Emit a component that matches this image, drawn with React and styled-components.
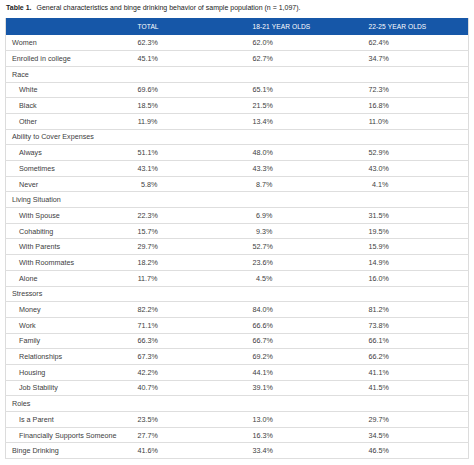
import React from 'react';
import styled, { createGlobalStyle } from 'styled-components';

const GlobalStyle = createGlobalStyle`
  html, body {
    margin: 0;
    padding: 0;
    background: #ffffff;
  }
  body {
    font-family: 'Liberation Sans', Arial, sans-serif;
  }
`;

const Page = styled.div`
  width: 474px;
  height: 465px;
  padding: 2px 6px 0 5px;
  box-sizing: border-box;
`;

const Caption = styled.div`
  font-size: 7px;
  line-height: 12px;
  height: 16px;
  color: #222;
  padding-left: 1px;
  b {
    font-weight: 700;
    margin-right: 3px;
  }
`;

const Table = styled.table`
  width: 463px;
  border-collapse: collapse;
  table-layout: fixed;
  border-left: 1px solid #dcdcdc;
  border-right: 1px solid #dcdcdc;
`;

const HeadCell = styled.th`
  background: #1657a8;
  color: #ffffff;
  font-size: 6.6px;
  font-weight: 400;
  text-align: left;
  height: 17px;
  padding: 0 0 0 6px;
  box-sizing: border-box;
  letter-spacing: 0.1px;
`;

const Row = styled.tr`
  height: 15.7px;
  border-bottom: 1px solid #dedede;
`;

const Label = styled.td`
  font-size: 7.2px;
  color: #404040;
  padding: 0 0 0 ${p => (p.$indent ? 13 : 6)}px;
  white-space: nowrap;
`;

const Cell = styled.td`
  font-size: 7.2px;
  color: #404040;
  padding: 0 0 0 6px;
`;

const Num = styled.span`
  display: inline-block;
  width: 20px;
  text-align: right;
`;

const rows = [
  ['Women', '62.3%', '62.0%', '62.4%'],
  ['Enrolled in college', '45.1%', '62.7%', '34.7%'],
  ['Race'],
  ['White', '69.6%', '65.1%', '72.3%', true],
  ['Black', '18.5%', '21.5%', '16.8%', true],
  ['Other', '11.9%', '13.4%', '11.0%', true],
  ['Ability to Cover Expenses'],
  ['Always', '51.1%', '48.0%', '52.9%', true],
  ['Sometimes', '43.1%', '43.3%', '43.0%', true],
  ['Never', '5.8%', '8.7%', '4.1%', true],
  ['Living Situation'],
  ['With Spouse', '22.3%', '6.9%', '31.5%', true],
  ['Cohabiting', '15.7%', '9.3%', '19.5%', true],
  ['With Parents', '29.7%', '52.7%', '15.9%', true],
  ['With Roommates', '18.2%', '23.6%', '14.9%', true],
  ['Alone', '11.7%', '4.5%', '16.0%', true],
  ['Stressors'],
  ['Money', '82.2%', '84.0%', '81.2%', true],
  ['Work', '71.1%', '66.6%', '73.8%', true],
  ['Family', '66.3%', '66.7%', '66.1%', true],
  ['Relationships', '67.3%', '69.2%', '66.2%', true],
  ['Housing', '42.2%', '44.1%', '41.1%', true],
  ['Job Stability', '40.7%', '39.1%', '41.5%', true],
  ['Roles'],
  ['Is a Parent', '23.5%', '13.0%', '29.7%', true],
  ['Financially Supports Someone', '27.7%', '16.3%', '34.5%', true],
  ['Binge Drinking', '41.6%', '33.4%', '46.5%'],
];

export default function App() {
  return (
    <>
      <GlobalStyle />
      <Page>
        <Caption>
          <b>Table 1.</b> General characteristics and binge drinking behavior of sample population (n = 1,097).
        </Caption>
        <Table>
          <colgroup>
            <col style={{ width: 126 }} />
            <col style={{ width: 115 }} />
            <col style={{ width: 116 }} />
            <col style={{ width: 106 }} />
          </colgroup>
          <thead>
            <tr>
              <HeadCell />
              <HeadCell>TOTAL</HeadCell>
              <HeadCell>18-21 YEAR OLDS</HeadCell>
              <HeadCell>22-25 YEAR OLDS</HeadCell>
            </tr>
          </thead>
          <tbody>
            {rows.map(([label, a, b, c, indent]) => (
              <Row key={label}>
                <Label $indent={indent}>{label}</Label>
                {[a, b, c].map((v, i) => (
                  <Cell key={i}>{v && <Num>{v}</Num>}</Cell>
                ))}
              </Row>
            ))}
          </tbody>
        </Table>
      </Page>
    </>
  );
}
